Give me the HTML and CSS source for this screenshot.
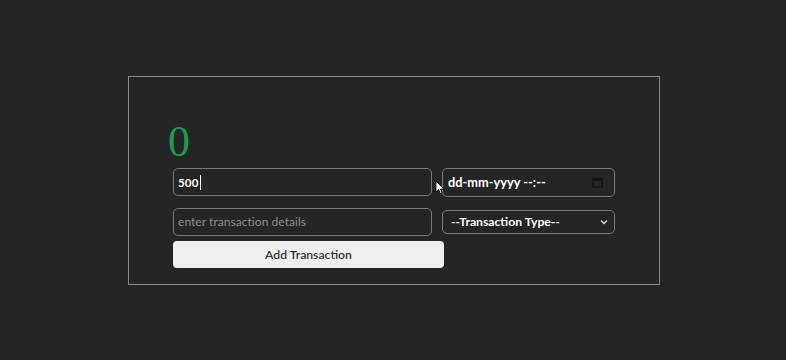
FILE: index.html
```html
<!DOCTYPE html>
<html lang="en">
<head>
<meta charset="utf-8">
<title>Expense Tracker</title>
<link rel="stylesheet" href="styles.css">
</head>
<body>
<main class="card">
  <h1 class="balance">0</h1>
  <form class="form">
    <div class="row">
      <div class="field amount"><span class="value">500</span><span class="caret"></span></div>
      <div class="field date">
        <span class="value">dd-mm-yyyy --:--</span>
        <svg class="cal" width="11" height="11" viewBox="0 0 11 11"><rect x="1" y="1.5" width="9" height="8.5" fill="none" stroke="#111" stroke-width="1.2"/><rect x="1" y="1.5" width="9" height="2.5" fill="#111"/></svg>
      </div>
    </div>
    <div class="row row2">
      <div class="field details"><span class="placeholder">enter transaction details</span></div>
      <div class="field select">
        <span class="value">--Transaction Type--</span>
        <svg width="8" height="6" viewBox="0 0 8 6"><path d="M1 1.5 L4 4.5 L7 1.5" fill="none" stroke="#ddd" stroke-width="1.3"/></svg>
      </div>
    </div>
    <button type="button" class="add">Add Transaction</button>
  </form>
  <svg class="pointer" width="10" height="15" viewBox="0 0 10 15"><path d="M1 1 L1 12 L3.6 9.6 L5.4 13.6 L7 12.9 L5.3 9 L8.8 9 Z" fill="#fff" stroke="#000" stroke-width="0.8"/></svg>
</main>
</body>
</html>
```
FILE: styles.css
```css
* { box-sizing: border-box; }
html, body { margin: 0; height: 100%; }
body {
  background: #252526;
  display: flex;
  align-items: center;
  justify-content: center;
  padding-left: 2px;
  font-family: Lato, "Open Sans", sans-serif;
  color: #fff;
}
.card {
  position: relative;
  width: 532px;
  height: 209px;
  border: 1px solid #8a8a8a;
  padding: 43px 0 0 39px;
}
.balance {
  margin: 0;
  font-family: "Liberation Serif", serif;
  font-weight: normal;
  font-size: 44px;
  line-height: 44px;
  color: #1d9a55;
}
.form {
  margin-top: 4px;
  padding-left: 5px;
}
.row {
  display: flex;
  align-items: center;
  gap: 10px;
}
.row2 { margin-top: 11px; }
.field {
  border: 1px solid #7a7a7a;
  border-radius: 5px;
  background: #252526;
  display: flex;
  align-items: center;
  font-weight: bold;
}
.amount, .details { width: 259px; height: 28px; padding-left: 4px; }
.amount .value { font-size: 11.5px; letter-spacing: 0.2px; }
.caret { width: 1px; height: 15px; background: #fff; margin-left: 1px; }
.date { width: 173px; height: 29px; padding: 0 11px 0 5px; justify-content: space-between; font-size: 12.8px; }
.cal { opacity: 0.9; }
.details .placeholder { color: #8f8f8f; font-weight: normal; font-size: 12px; letter-spacing: 0.05px; }
.select { width: 173px; height: 24px; padding: 0 6px 0 8px; justify-content: space-between; font-size: 12.2px; }
.add {
  display: block;
  margin-top: 5px;
  width: 271px;
  height: 27px;
  border: none;
  border-radius: 4px;
  background: #efefef;
  color: #333;
  font-family: Lato, "Open Sans", sans-serif;
  font-size: 12.2px;
  font-weight: 600;
}
.pointer { position: absolute; left: 306px; top: 103px; }
```
